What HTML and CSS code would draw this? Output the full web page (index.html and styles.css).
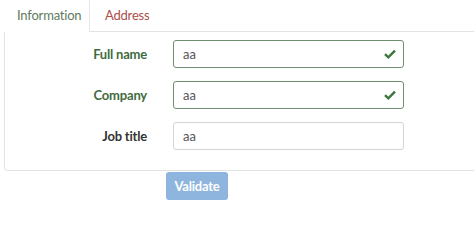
FILE: index.html
```html
<!DOCTYPE html>
<html>
<head>
<meta charset="utf-8">
<link rel="stylesheet" href="styles.css">
</head>
<body>
<div class="page">
  <div class="tabs">
    <div class="tab active">Information</div>
    <div class="tab invalid">Address</div>
    <div class="tab-fill"></div>
  </div>
  <div class="panel">
    <div class="row success">
      <label class="label">Full name</label>
      <div class="field">
        <input class="input" type="text" value="aa">
        <svg class="check" viewBox="0 0 12 10" width="12" height="10"><path d="M1 5.2 L4.3 8.3 L11 1.6" fill="none" stroke="#3c763d" stroke-width="2.4" stroke-linejoin="miter"/></svg>
      </div>
    </div>
    <div class="row success">
      <label class="label">Company</label>
      <div class="field">
        <input class="input" type="text" value="aa">
        <svg class="check" viewBox="0 0 12 10" width="12" height="10"><path d="M1 5.2 L4.3 8.3 L11 1.6" fill="none" stroke="#3c763d" stroke-width="2.4" stroke-linejoin="miter"/></svg>
      </div>
    </div>
    <div class="row">
      <label class="label">Job title</label>
      <div class="field">
        <input class="input" type="text" value="aa">
      </div>
    </div>
  </div>
  <div class="actions">
    <button class="btn" disabled>Validate</button>
  </div>
</div>
</body>
</html>
```
FILE: styles.css
```css
html, body {
  margin: 0;
  padding: 0;
  background: #fff;
}
body {
  font-family: Lato, "Open Sans", sans-serif;
  font-size: 13px;
  width: 474px;
  overflow: hidden;
}
.page {
  padding-left: 4px;
  width: 470px;
}
.tabs {
  display: flex;
  height: 32px;
}
.tab {
  box-sizing: border-box;
  height: 32px;
  line-height: 30px;
  padding: 0 12px;
  font-size: 13px;
  letter-spacing: -0.2px;
}
.tab.active {
  width: 86px;
  padding-left: 13px;
  color: #5e7a5e;
  border-right: 1px solid #e6e6e6;
}
.tab.invalid {
  color: #a9504d;
  padding-left: 15px;
  border-bottom: 1px solid #e3e3e3;
  width: 64px;
}
.tab-fill {
  flex: 1;
  border-bottom: 1px solid #e3e3e3;
}
.panel {
  border: 1px solid #e3e3e3;
  border-top: none;
  border-right: none;
  border-radius: 0 0 0 4px;
  padding: 8px 0 20px 0;
  display: flex;
  flex-direction: column;
  gap: 13px;
}
.row {
  display: flex;
  align-items: center;
  height: 28px;
}
.label {
  width: 142px;
  text-align: right;
  font-weight: bold;
  color: #333;
  margin-right: 26px;
  letter-spacing: -0.2px;
}
.row.success .label {
  color: #3f6b3f;
}
.field {
  position: relative;
  width: 231px;
  height: 28px;
}
.input {
  box-sizing: border-box;
  width: 100%;
  height: 28px;
  border: 1px solid #d5d5d5;
  border-radius: 3px;
  padding: 0 9px;
  font-family: Lato, "Open Sans", sans-serif;
  font-size: 13px;
  color: #555;
  outline: none;
  margin: 0;
}
.row.success .input {
  border-color: #6f8f6f;
}
.check {
  position: absolute;
  right: 8px;
  top: 9px;
}
.actions {
  padding-left: 162px;
  padding-top: 1px;
}
.btn {
  width: 62px;
  height: 28px;
  border: none;
  border-radius: 3px;
  background: #8db5de;
  color: #fff;
  font-family: Lato, "Open Sans", sans-serif;
  font-weight: bold;
  font-size: 13px;
  padding: 0;
  letter-spacing: -0.2px;
}
```
